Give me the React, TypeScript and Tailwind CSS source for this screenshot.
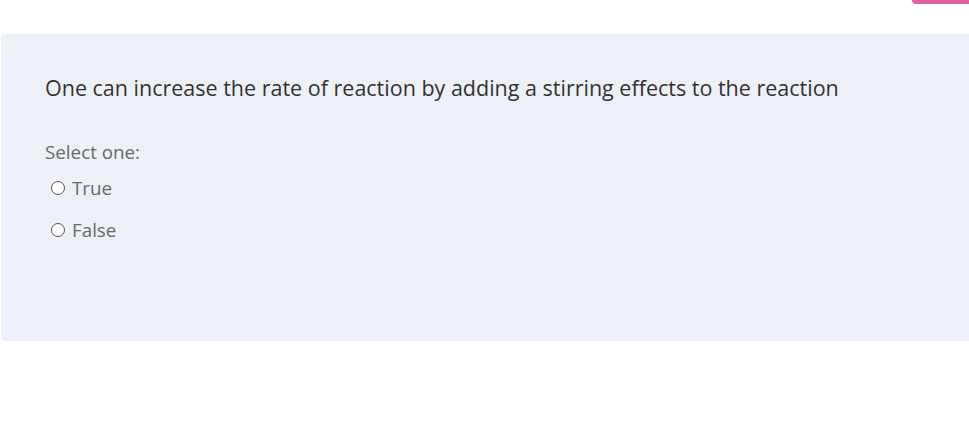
export default function App() {
  return (
    <div className="w-[969px] h-[423px] bg-white overflow-hidden relative" style={{ fontFamily: '"Open Sans", "Noto Sans", sans-serif' }}>
      <div className="absolute right-0 top-0 w-[57px] h-[4px] bg-[#e2609c] rounded-bl-[4px]" />
      <div className="pt-[34px] pl-[1px]">
        <div className="h-[307px] bg-[#edf0f7] rounded-l-[4px] pl-[44px] pt-[39px]">
          <p className="text-[21.5px] leading-[30px] text-[#333333]">
            One can increase the rate of reaction by adding a stirring effects to the reaction
          </p>
          <p className="mt-[36px] text-[18.8px] leading-[26px] text-[#6a6a6a]">Select one:</p>
          <div className="mt-[10px] flex flex-col gap-[16px] pl-[6px]">
            <label className="flex items-center gap-[7px] text-[18.8px] leading-[26px] text-[#6a6a6a]">
              <span className="w-[14px] h-[14px] rounded-full border border-[#555] bg-white" />
              True
            </label>
            <label className="flex items-center gap-[7px] text-[18.8px] leading-[26px] text-[#6a6a6a]">
              <span className="w-[14px] h-[14px] rounded-full border border-[#555] bg-white" />
              False
            </label>
          </div>
        </div>
      </div>
    </div>
  );
}
